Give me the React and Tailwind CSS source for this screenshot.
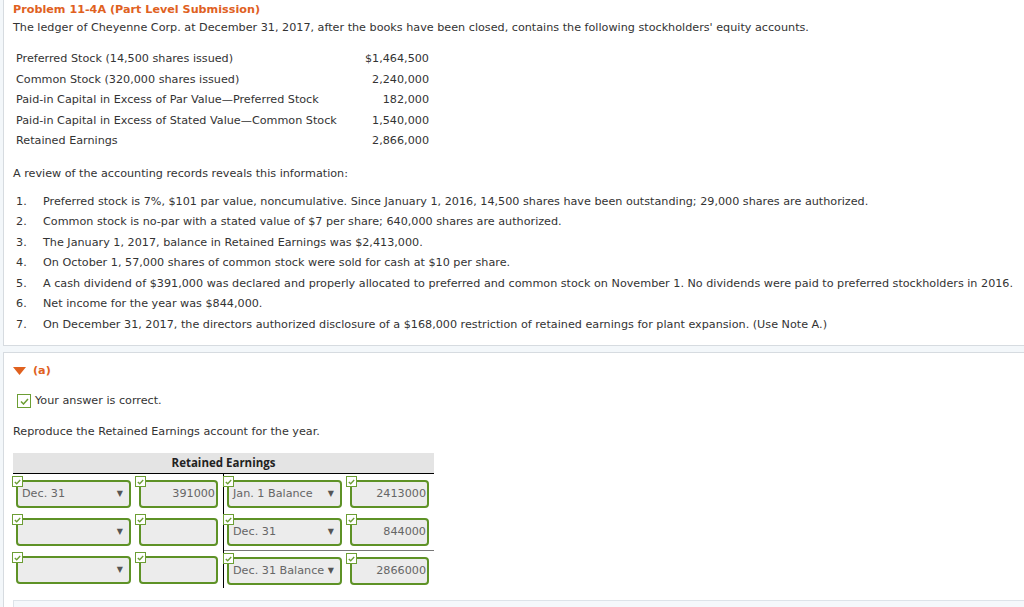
import React from 'react';

const equity = [
  ['Preferred Stock (14,500 shares issued)', '$1,464,500'],
  ['Common Stock (320,000 shares issued)', '2,240,000'],
  ['Paid-in Capital in Excess of Par Value\u2014Preferred Stock', '182,000'],
  ['Paid-in Capital in Excess of Stated Value\u2014Common Stock', '1,540,000'],
  ['Retained Earnings', '2,866,000'],
];

const facts = [
  'Preferred stock is 7%, $101 par value, noncumulative. Since January 1, 2016, 14,500 shares have been outstanding; 29,000 shares are authorized.',
  'Common stock is no-par with a stated value of $7 per share; 640,000 shares are authorized.',
  'The January 1, 2017, balance in Retained Earnings was $2,413,000.',
  'On October 1, 57,000 shares of common stock were sold for cash at $10 per share.',
  'A cash dividend of $391,000 was declared and properly allocated to preferred and common stock on November 1. No dividends were paid to preferred stockholders in 2016.',
  'Net income for the year was $844,000.',
  'On December 31, 2017, the directors authorized disclosure of a $168,000 restriction of retained earnings for plant expansion. (Use Note A.)',
];

const debits = [
  { label: 'Dec. 31', amount: '391000' },
  { label: '', amount: '' },
  { label: '', amount: '' },
];

const credits = [
  { label: 'Jan. 1 Balance', amount: '2413000' },
  { label: 'Dec. 31', amount: '844000' },
  { label: 'Dec. 31 Balance', amount: '2866000' },
];

function MiniCheck() {
  return (
    <span className="absolute -left-[6px] -top-[6px] w-[11px] h-[11px] bg-white border border-[#6c9e34] flex items-center justify-center">
      <svg width="7" height="6" viewBox="0 0 7 6">
        <path d="M0.8 3 L2.7 4.8 L6.2 1" fill="none" stroke="#6c9e34" strokeWidth="1.3" />
      </svg>
    </span>
  );
}

function SelectBox({ label }) {
  return (
    <div className="relative w-[115px] h-[28px] border-2 border-[#5e9226] rounded-[4px] bg-[#ececec] flex items-center justify-between pl-[4px] pr-[6px] text-[#666]">
      <MiniCheck />
      <span>{label}</span>
      <span className="text-[8px] text-[#555]">▼</span>
    </div>
  );
}

function AmountBox({ value }) {
  return (
    <div className="relative w-[79px] h-[28px] border-2 border-[#5e9226] rounded-[4px] bg-[#ececec] flex items-center justify-end pr-[1px] text-[#666]">
      <MiniCheck />
      <span>{value}</span>
    </div>
  );
}

export default function App() {
  return (
    <div className="min-h-screen bg-[#f3f7fa] pl-[3px] font-['DejaVu_Sans',sans-serif] text-[11.2px] text-[#333] overflow-hidden">
      {/* problem statement */}
      <div className="bg-white border-l border-b border-[#d6dbe0] pl-[9px] pt-[1px] pb-[10px]">
        <div className="leading-[18px] font-bold text-[#e0611f]">Problem 11-4A (Part Level Submission)</div>
        <div className="leading-[17px]">
          The ledger of Cheyenne Corp. at December 31, 2017, after the books have been closed, contains the following stockholders' equity accounts.
        </div>

        <div className="mt-[13px] ml-[3px] w-[416px] grid grid-cols-[1fr_auto] pr-[3px]">
          {equity.map(([name, amt]) => (
            <React.Fragment key={name}>
              <div className="leading-[20.5px]">{name}</div>
              <div className="leading-[20.5px] text-right">{amt}</div>
            </React.Fragment>
          ))}
        </div>

        <div className="mt-[13px] leading-[17px]">A review of the accounting records reveals this information:</div>

        <div className="mt-[10px] ml-[3px]">
          {facts.map((f, i) => (
            <div key={i} className="flex leading-[20.5px]">
              <span className="w-[27px] shrink-0">{i + 1}.</span>
              <span>{f}</span>
            </div>
          ))}
        </div>
      </div>

      {/* part (a) */}
      <div className="mt-[6px] bg-white border-l border-t border-[#d6dbe0] pl-[9px] pt-[9px]">
        <div className="flex items-center leading-[17px]">
          <svg width="13" height="8" viewBox="0 0 13 8" className="mr-[7px]">
            <path d="M0 0 H13 L6.5 8 Z" fill="#e0611f" />
          </svg>
          <span className="font-bold text-[#e0611f]">(a)</span>
        </div>

        <div className="mt-[15px] ml-[4px] flex items-center h-[14px]">
          <span className="w-[14px] h-[14px] border-[1.5px] border-[#6c9e34] bg-white flex items-center justify-center mr-[4px]">
            <svg width="9" height="7" viewBox="0 0 9 7">
              <path d="M1 3.5 L3.5 6 L8 1" fill="none" stroke="#6c9e34" strokeWidth="1.5" />
            </svg>
          </span>
          <span>Your answer is correct.</span>
        </div>

        <div className="mt-[15px] leading-[17px]">Reproduce the Retained Earnings account for the year.</div>

        <div className="mt-[13px] w-[421px]">
          <div className="h-[21px] bg-[#e4e4e4] border-b border-black flex items-center justify-center font-['Open_Sans',sans-serif] font-bold text-[11.5px] text-[#222]">
            Retained Earnings
          </div>
          <div className="flex">
            <div className="w-[210px]">
              {debits.map((r, i) => (
                <div key={i} className="h-[38px] pt-[6px] pl-[3px] flex gap-[8px]">
                  <SelectBox label={r.label} />
                  <AmountBox value={r.amount} />
                </div>
              ))}
            </div>
            <div className="w-[211px] border-l border-black">
              {credits.map((r, i) => (
                <div key={i} className={'h-[38px] pt-[6px] pl-[3px] flex gap-[8px] ' + (i === 2 ? 'border-t border-[#777]' : '')}>
                  <SelectBox label={r.label} />
                  <AmountBox value={r.amount} />
                </div>
              ))}
            </div>
          </div>
        </div>

        <div className="mt-[12px] h-[20px] bg-[#f5f8fb] border-t border-l border-[#dde3e9]" />
      </div>
    </div>
  );
}
